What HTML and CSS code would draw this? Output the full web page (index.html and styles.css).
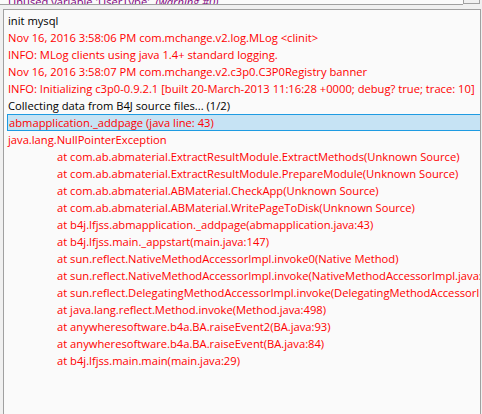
FILE: index.html
```html
<!DOCTYPE html>
<html>
<head>
<meta charset="utf-8">
<link rel="stylesheet" href="styles.css">
</head>
<body>
<div class="prev"><div class="prev-text">Unused variable 'UserType'. <i>(warning #0)</i></div><div class="prev-box"></div></div>
<div class="panel">
  <div class="line black">init mysql</div>
  <div class="line">Nov 16, 2016 3:58:06 PM com.mchange.v2.log.MLog &lt;clinit&gt;</div>
  <div class="line">INFO: MLog clients using java 1.4+ standard logging.</div>
  <div class="line">Nov 16, 2016 3:58:07 PM com.mchange.v2.c3p0.C3P0Registry banner</div>
  <div class="line">INFO: Initializing c3p0-0.9.2.1 [built 20-March-2013 11:16:28 +0000; debug? true; trace: 10]</div>
  <div class="line black">Collecting data from B4J source files... (1/2)</div>
  <div class="line selected">abmapplication._addpage (java line: 43)</div>
  <div class="line">java.lang.NullPointerException</div>
  <div class="line at">at com.ab.abmaterial.ExtractResultModule.ExtractMethods(Unknown Source)</div>
  <div class="line at">at com.ab.abmaterial.ExtractResultModule.PrepareModule(Unknown Source)</div>
  <div class="line at">at com.ab.abmaterial.ABMaterial.CheckApp(Unknown Source)</div>
  <div class="line at">at com.ab.abmaterial.ABMaterial.WritePageToDisk(Unknown Source)</div>
  <div class="line at">at b4j.lfjss.abmapplication._addpage(abmapplication.java:43)</div>
  <div class="line at">at b4j.lfjss.main._appstart(main.java:147)</div>
  <div class="line at">at sun.reflect.NativeMethodAccessorImpl.invoke0(Native Method)</div>
  <div class="line at">at sun.reflect.NativeMethodAccessorImpl.invoke(NativeMethodAccessorImpl.java:62)</div>
  <div class="line at">at sun.reflect.DelegatingMethodAccessorImpl.invoke(DelegatingMethodAccessorImpl.java:43)</div>
  <div class="line at">at java.lang.reflect.Method.invoke(Method.java:498)</div>
  <div class="line at">at anywheresoftware.b4a.BA.raiseEvent2(BA.java:93)</div>
  <div class="line at">at anywheresoftware.b4a.BA.raiseEvent(BA.java:84)</div>
  <div class="line at">at b4j.lfjss.main.main(main.java:29)</div>
</div>
</body>
</html>
```
FILE: styles.css
```css
html, body {
  margin: 0;
  padding: 0;
  background: #f0f0f0;
  overflow: hidden;
  height: 414px;
}
body {
  font-family: "Open Sans", "Noto Sans", sans-serif;
  font-size: 11.2px;
}
.prev {
  display: flex;
  height: 4px;
  margin-bottom: 5px;
}
.prev-text {
  flex: 1;
  height: 4px;
  overflow: hidden;
  background: #fafafa;
  border-bottom: 1px solid #a0a0a0;
  color: #800080;
  line-height: 4px;
  padding-left: 8px;
  white-space: nowrap;
}
.prev-box {
  width: 15px;
  height: 3px;
  margin-right: 2px;
  border: 1px solid #a0a0a0;
  border-top: none;
  background: #f0f0f0;
}
.panel {
  margin-left: 3px;
  width: 476px;
  height: 420px;
  border: 1px solid #a0a0a0;
  border-bottom: none;
  background: #fafafa;
  padding-top: 2px;
  overflow: hidden;
}
.line {
  height: 17px;
  line-height: 17px;
  color: #ff0000;
  white-space: nowrap;
  padding-left: 4px;
}
.line.black {
  color: #000000;
}
.line.at {
  padding-left: 53px;
}
.line.selected {
  height: 15px;
  line-height: 15px;
  margin-left: 3px;
  padding-left: 1px;
  background: #c6e3f4;
  border: 1px solid #1e9be2;
  border-right: none;
}
```
